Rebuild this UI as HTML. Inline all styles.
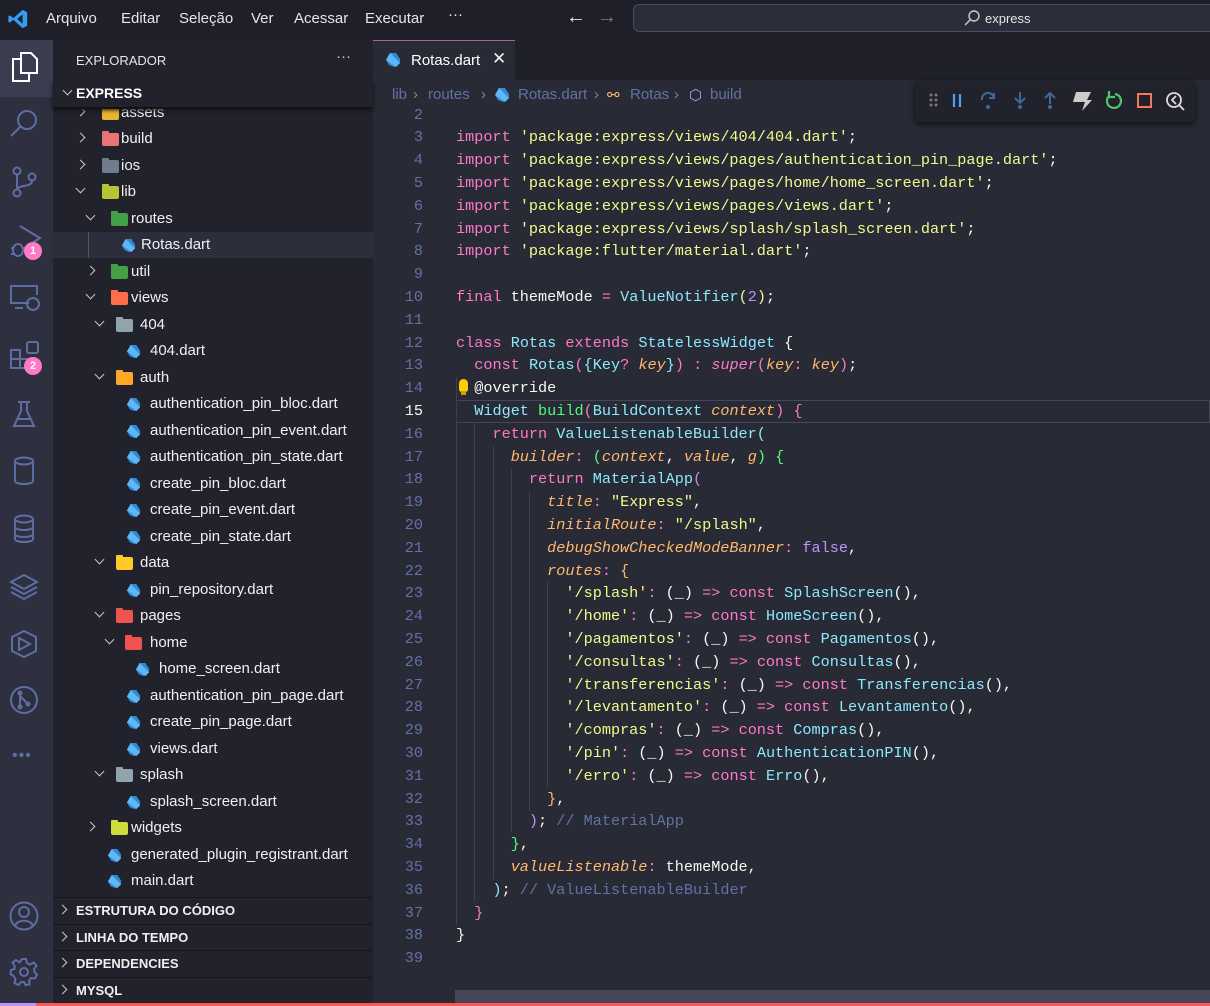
<!DOCTYPE html>
<html><head><meta charset="utf-8"><style>
*{margin:0;padding:0;box-sizing:border-box}
body{width:1210px;height:1006px;background:#282a36;overflow:hidden;position:relative;font-family:"Liberation Sans",sans-serif;color:#f8f8f2}
.abs{position:absolute}
#title{left:0;top:0;width:1210px;height:40px;background:#1e1f29}
.menu{top:10px;font-size:15px;color:#e6e6e6}
#act{left:0;top:40px;width:53px;height:963px;background:#2e3040}
#side{left:53px;top:40px;width:320px;height:963px;background:#21222c}
.row{position:absolute;left:0;width:320px;height:26px;font-size:15px;line-height:26px;color:#f0f0f0;white-space:nowrap}
.chev{position:absolute;top:8px;width:7px;height:7px;border-right:1.5px solid #c8c8c8;border-bottom:1.5px solid #c8c8c8}
.chev.o{transform:rotate(45deg);top:6px}
.chev.c{transform:rotate(-45deg)}
.fold{position:absolute;top:7px;width:17px;height:13px;border-radius:2px}
.fold:before{content:"";position:absolute;left:0;top:-2px;width:7px;height:3px;border-radius:1px 1px 0 0;background:inherit}
.dart{position:absolute;top:6px;width:15px;height:15px}
.panel{position:absolute;left:0;width:320px;height:26px;border-top:1px solid #15161d;font-size:13px;font-weight:bold;line-height:26px;color:#f0f0f0}
#code{left:373px;top:103.6px;font-family:"Liberation Mono",monospace;font-size:15.2px;line-height:22.8px;white-space:pre}
.ln{position:absolute;left:0;width:50px;text-align:right;color:#6272a4}
.cl{position:absolute;left:83px}
.k{color:#ff79c6}.s{color:#f1fa8c}.c{color:#8be9fd}.g{color:#50fa7b}.p{color:#ffb86c;font-style:italic}.b{color:#bd93f9}.m{color:#6272a4}.ki{color:#ff79c6;font-style:italic}.o{color:#ffb86c}
.guide{position:absolute;width:1px;background:#3d4052}
.bc{position:absolute;top:86px;font-size:15px;color:#6272a4;white-space:nowrap}
</style></head><body>
<div id="title" class="abs">
<svg class="abs" style="left:7px;top:8px" width="22" height="22" viewBox="0 0 24 24"><path d="M17 2 L22 4.5 V19.5 L17 22 L7 13 L3 16 L1.5 15 V9 L3 8 L7 11 L17 2Z M17 7 L11 12 L17 17Z" fill="#2f9ef4" fill-rule="evenodd"/></svg>
<div class="abs menu" style="left:46px">Arquivo</div>
<div class="abs menu" style="left:121px">Editar</div>
<div class="abs menu" style="left:179px">Seleção</div>
<div class="abs menu" style="left:251px">Ver</div>
<div class="abs menu" style="left:294px">Acessar</div>
<div class="abs menu" style="left:365px">Executar</div>
<div class="abs menu" style="left:448px;top:6px">···</div>
<div class="abs" style="left:566px;top:6px;font-size:20px;color:#e6e6e6">←</div>
<div class="abs" style="left:597px;top:6px;font-size:20px;color:#777">→</div>
<div class="abs" style="left:633px;top:4px;width:590px;height:28px;background:#2b2d3a;border:1px solid #4a4d60;border-radius:6px"></div>
<svg class="abs" style="left:963px;top:9px" width="18" height="18" viewBox="0 0 18 18"><circle cx="11" cy="7" r="5" fill="none" stroke="#ccc" stroke-width="1.4"/><path d="M7.5 10.5 L2 16" stroke="#ccc" stroke-width="1.4"/></svg>
<div class="abs" style="left:985px;top:11px;font-size:13px;color:#e6e6e6">express</div>
</div>

<div id="act" class="abs">
<div class="abs" style="left:0;top:0;width:53px;height:57px;background:#3b3d50"></div>
<svg class="abs" style="left:9px;top:11px" width="30" height="32" viewBox="0 0 30 32"><path d="M12 2 H22 L28 8 V22 H12Z" fill="none" stroke="#fff" stroke-width="2"/><path d="M12 8 H4 V30 H20 V22" fill="none" stroke="#fff" stroke-width="2"/></svg>
<svg class="abs" style="left:8px;top:67px" width="34" height="34" viewBox="0 0 34 34" fill="none" stroke="#5e6ea4" stroke-width="2"><circle cx="19" cy="13" r="9"/><path d="M12.5 19.5 L3 29"/></svg>
<svg class="abs" style="left:9px;top:125px" width="30" height="34" viewBox="0 0 30 34" fill="none" stroke="#5e6ea4" stroke-width="2"><circle cx="8" cy="6" r="3.5"/><circle cx="8" cy="28" r="3.5"/><circle cx="23" cy="12" r="3.5"/><path d="M8 10 V24 M23 16 C23 22 10 20 8 24"/></svg>
<svg class="abs" style="left:8px;top:184px" width="34" height="34" viewBox="0 0 34 34" fill="none" stroke="#5e6ea4" stroke-width="2"><path d="M12 2 L32 14 L16 24"/><ellipse cx="10" cy="26" rx="5" ry="6"/><path d="M3 24 H6 M3 30 H6 M14 24 H17"/></svg>
<div class="abs" style="left:24px;top:202px;width:18px;height:18px;border-radius:9px;background:#ff79c6;font-size:11px;font-weight:bold;text-align:center;line-height:18px;color:#fff">1</div>
<svg class="abs" style="left:9px;top:243px" width="32" height="30" viewBox="0 0 32 30" fill="none" stroke="#5e6ea4" stroke-width="2"><path d="M20 20 H2 V3 H28 V12"/><path d="M6 25 H14"/><circle cx="24" cy="21" r="6"/></svg>
<svg class="abs" style="left:9px;top:300px" width="32" height="32" viewBox="0 0 32 32" fill="none" stroke="#5e6ea4" stroke-width="2"><rect x="2" y="10" width="9" height="9"/><rect x="2" y="19" width="9" height="9"/><rect x="11" y="19" width="9" height="9"/><rect x="18" y="2" width="11" height="11" rx="2"/></svg>
<div class="abs" style="left:24px;top:317px;width:18px;height:18px;border-radius:9px;background:#ff79c6;font-size:11px;font-weight:bold;text-align:center;line-height:18px;color:#fff">2</div>
<svg class="abs" style="left:12px;top:360px" width="24" height="28" viewBox="0 0 24 28" fill="none" stroke="#5e6ea4" stroke-width="2"><path d="M6 2 H18 M9 2 V11 L2 26 H22 L15 11 V2 M5 19 H19"/></svg>
<svg class="abs" style="left:13px;top:416px" width="22" height="30" viewBox="0 0 22 30" fill="none" stroke="#5e6ea4" stroke-width="2"><ellipse cx="11" cy="5" rx="9" ry="3.5"/><path d="M2 5 V25 C2 29 20 29 20 25 V5"/></svg>
<svg class="abs" style="left:13px;top:474px" width="22" height="30" viewBox="0 0 22 30" fill="none" stroke="#5e6ea4" stroke-width="2"><ellipse cx="11" cy="5" rx="9" ry="3.5"/><path d="M2 5 V25 C2 29 20 29 20 25 V5 M2 13 C2 17 20 17 20 13 M2 20 C2 24 20 24 20 20"/></svg>
<svg class="abs" style="left:9px;top:532px" width="30" height="30" viewBox="0 0 30 30" fill="none" stroke="#5e6ea4" stroke-width="2"><path d="M15 3 L28 10 L15 17 L2 10Z M2 15 L15 22 L28 15 M2 20 L15 27 L28 20"/></svg>
<svg class="abs" style="left:10px;top:589px" width="28" height="30" viewBox="0 0 28 30" fill="none" stroke="#5e6ea4" stroke-width="2"><path d="M14 2 L26 8 V22 L14 28 L2 22 V8Z M9 9 L20 15 L9 21Z"/></svg>
<svg class="abs" style="left:9px;top:645px" width="30" height="30" viewBox="0 0 30 30" fill="none" stroke="#5e6ea4" stroke-width="2"><circle cx="15" cy="15" r="13"/><path d="M11 7 V23 M11 11 L19 19"/><circle cx="11" cy="8" r="1.5"/><circle cx="11" cy="22" r="1.5"/><circle cx="19" cy="19" r="1.5"/></svg>
<div class="abs" style="left:12px;top:707px;font-size:16px;color:#5e6ea4;letter-spacing:1px">•••</div>
<svg class="abs" style="left:9px;top:861px" width="30" height="30" viewBox="0 0 30 30" fill="none" stroke="#5e6ea4" stroke-width="2"><circle cx="15" cy="15" r="13.5"/><circle cx="15" cy="11" r="5"/><path d="M6 25 C8 18 22 18 24 25"/></svg>
<svg class="abs" style="left:9px;top:917px" width="30" height="30" viewBox="0 0 30 30" fill="none" stroke="#5e6ea4" stroke-width="2"><circle cx="15" cy="15" r="4"/><path d="M13 2 H17 L18 6 L21 7.5 L25 5.5 L27.5 9 L25 12 L25.5 15 L28 17.5 L26 21.5 L22 21 L20 23.5 L20.5 27.5 L16.5 28 L15 25 L12 25 L9.5 28 L5.5 26 L6.5 22 L4.5 19 L1.5 17 L2 13 L5.5 12 L5.5 8.5 L3.5 5.5 L7 3 L10.5 5.5 Z"/></svg>
</div>

<div id="side" class="abs">
<div class="abs" style="left:23px;top:13px;font-size:13px;color:#e6e6e6">EXPLORADOR</div>
<div class="abs" style="left:283px;top:8px;font-size:15px;color:#ccc">···</div>
<div class="abs" style="left:0;top:40px;width:320px;height:27px;background:#21222c;box-shadow:0 3px 4px #111;z-index:2"></div>
<div class="chev o abs" style="left:11px;top:47px;z-index:3"></div>
<div class="abs" style="left:23px;top:45px;font-size:14px;font-weight:bold;color:#fff;z-index:3">EXPRESS</div>
<div class="abs" style="left:0;top:68.5px;width:320px;height:789px;overflow:hidden" id="tree">
<div class="row" style="top:-9px"><div class="chev c" style="left:24px"></div><div class="fold" style="left:49px;background:#e8b530"></div><span style="position:absolute;left:68px">assets</span></div>
<div class="row" style="top:17.5px"><div class="chev c" style="left:24px"></div><div class="fold" style="left:49px;background:#e87474"></div><span style="position:absolute;left:68px">build</span></div>
<div class="row" style="top:44px"><div class="chev c" style="left:24px"></div><div class="fold" style="left:49px;background:#6f7d8c"></div><span style="position:absolute;left:68px">ios</span></div>
<div class="row" style="top:70.5px"><div class="chev o" style="left:24px"></div><div class="fold" style="left:49px;background:#b8c431"></div><span style="position:absolute;left:68px">lib</span></div>
<div class="row" style="top:97px"><div class="chev o" style="left:34px"></div><div class="fold" style="left:58px;background:#43a047"></div><span style="position:absolute;left:78px">routes</span></div>
<div class="row" style="top:123.5px;background:#2c2e3c"><div class="guide" style="left:35px;top:0;height:26px;background:#555"></div><svg class="dart" style="left:68px" viewBox="0 0 16 16"><path d="M5 1 L11 1 L15 7 L15 11 L9 15 L4 13 L1 8 Z" fill="#2f8bd8"/><path d="M5 1 L15 11 L11 15 L1 8Z" fill="#5fb8f5"/></svg><span style="position:absolute;left:88px">Rotas.dart</span></div>
<div class="row" style="top:150px"><div class="chev c" style="left:34px"></div><div class="fold" style="left:58px;background:#43a047"></div><span style="position:absolute;left:78px">util</span></div>
<div class="row" style="top:176.5px"><div class="chev o" style="left:34px"></div><div class="fold" style="left:58px;background:#ff6e4a"></div><span style="position:absolute;left:78px">views</span></div>
<div class="row" style="top:203px"><div class="chev o" style="left:43px"></div><div class="fold" style="left:63px;background:#90a4ae"></div><span style="position:absolute;left:87px">404</span></div>
<div class="row" style="top:229.5px"><svg class="dart" style="left:73px" viewBox="0 0 16 16"><path d="M5 1 L11 1 L15 7 L15 11 L9 15 L4 13 L1 8 Z" fill="#2f8bd8"/><path d="M5 1 L15 11 L11 15 L1 8Z" fill="#5fb8f5"/></svg><span style="position:absolute;left:97px">404.dart</span></div>
<div class="row" style="top:256px"><div class="chev o" style="left:43px"></div><div class="fold" style="left:63px;background:#ffa726"></div><span style="position:absolute;left:87px">auth</span></div>
<div class="row" style="top:282.5px"><svg class="dart" style="left:73px" viewBox="0 0 16 16"><path d="M5 1 L11 1 L15 7 L15 11 L9 15 L4 13 L1 8 Z" fill="#2f8bd8"/><path d="M5 1 L15 11 L11 15 L1 8Z" fill="#5fb8f5"/></svg><span style="position:absolute;left:97px">authentication_pin_bloc.dart</span></div>
<div class="row" style="top:309px"><svg class="dart" style="left:73px" viewBox="0 0 16 16"><path d="M5 1 L11 1 L15 7 L15 11 L9 15 L4 13 L1 8 Z" fill="#2f8bd8"/><path d="M5 1 L15 11 L11 15 L1 8Z" fill="#5fb8f5"/></svg><span style="position:absolute;left:97px">authentication_pin_event.dart</span></div>
<div class="row" style="top:335.5px"><svg class="dart" style="left:73px" viewBox="0 0 16 16"><path d="M5 1 L11 1 L15 7 L15 11 L9 15 L4 13 L1 8 Z" fill="#2f8bd8"/><path d="M5 1 L15 11 L11 15 L1 8Z" fill="#5fb8f5"/></svg><span style="position:absolute;left:97px">authentication_pin_state.dart</span></div>
<div class="row" style="top:362px"><svg class="dart" style="left:73px" viewBox="0 0 16 16"><path d="M5 1 L11 1 L15 7 L15 11 L9 15 L4 13 L1 8 Z" fill="#2f8bd8"/><path d="M5 1 L15 11 L11 15 L1 8Z" fill="#5fb8f5"/></svg><span style="position:absolute;left:97px">create_pin_bloc.dart</span></div>
<div class="row" style="top:388.5px"><svg class="dart" style="left:73px" viewBox="0 0 16 16"><path d="M5 1 L11 1 L15 7 L15 11 L9 15 L4 13 L1 8 Z" fill="#2f8bd8"/><path d="M5 1 L15 11 L11 15 L1 8Z" fill="#5fb8f5"/></svg><span style="position:absolute;left:97px">create_pin_event.dart</span></div>
<div class="row" style="top:415px"><svg class="dart" style="left:73px" viewBox="0 0 16 16"><path d="M5 1 L11 1 L15 7 L15 11 L9 15 L4 13 L1 8 Z" fill="#2f8bd8"/><path d="M5 1 L15 11 L11 15 L1 8Z" fill="#5fb8f5"/></svg><span style="position:absolute;left:97px">create_pin_state.dart</span></div>
<div class="row" style="top:441.5px"><div class="chev o" style="left:43px"></div><div class="fold" style="left:63px;background:#ffca28"></div><span style="position:absolute;left:87px">data</span></div>
<div class="row" style="top:468px"><svg class="dart" style="left:73px" viewBox="0 0 16 16"><path d="M5 1 L11 1 L15 7 L15 11 L9 15 L4 13 L1 8 Z" fill="#2f8bd8"/><path d="M5 1 L15 11 L11 15 L1 8Z" fill="#5fb8f5"/></svg><span style="position:absolute;left:97px">pin_repository.dart</span></div>
<div class="row" style="top:494.5px"><div class="chev o" style="left:43px"></div><div class="fold" style="left:63px;background:#ef5350"></div><span style="position:absolute;left:87px">pages</span></div>
<div class="row" style="top:521px"><div class="chev o" style="left:53px"></div><div class="fold" style="left:72px;background:#ef5350"></div><span style="position:absolute;left:97px">home</span></div>
<div class="row" style="top:547.5px"><svg class="dart" style="left:82px" viewBox="0 0 16 16"><path d="M5 1 L11 1 L15 7 L15 11 L9 15 L4 13 L1 8 Z" fill="#2f8bd8"/><path d="M5 1 L15 11 L11 15 L1 8Z" fill="#5fb8f5"/></svg><span style="position:absolute;left:106px">home_screen.dart</span></div>
<div class="row" style="top:574px"><svg class="dart" style="left:73px" viewBox="0 0 16 16"><path d="M5 1 L11 1 L15 7 L15 11 L9 15 L4 13 L1 8 Z" fill="#2f8bd8"/><path d="M5 1 L15 11 L11 15 L1 8Z" fill="#5fb8f5"/></svg><span style="position:absolute;left:97px">authentication_pin_page.dart</span></div>
<div class="row" style="top:600.5px"><svg class="dart" style="left:73px" viewBox="0 0 16 16"><path d="M5 1 L11 1 L15 7 L15 11 L9 15 L4 13 L1 8 Z" fill="#2f8bd8"/><path d="M5 1 L15 11 L11 15 L1 8Z" fill="#5fb8f5"/></svg><span style="position:absolute;left:97px">create_pin_page.dart</span></div>
<div class="row" style="top:627px"><svg class="dart" style="left:73px" viewBox="0 0 16 16"><path d="M5 1 L11 1 L15 7 L15 11 L9 15 L4 13 L1 8 Z" fill="#2f8bd8"/><path d="M5 1 L15 11 L11 15 L1 8Z" fill="#5fb8f5"/></svg><span style="position:absolute;left:97px">views.dart</span></div>
<div class="row" style="top:653.5px"><div class="chev o" style="left:43px"></div><div class="fold" style="left:63px;background:#90a4ae"></div><span style="position:absolute;left:87px">splash</span></div>
<div class="row" style="top:680px"><svg class="dart" style="left:73px" viewBox="0 0 16 16"><path d="M5 1 L11 1 L15 7 L15 11 L9 15 L4 13 L1 8 Z" fill="#2f8bd8"/><path d="M5 1 L15 11 L11 15 L1 8Z" fill="#5fb8f5"/></svg><span style="position:absolute;left:97px">splash_screen.dart</span></div>
<div class="row" style="top:706.5px"><div class="chev c" style="left:34px"></div><div class="fold" style="left:58px;background:#cddc39"></div><span style="position:absolute;left:78px">widgets</span></div>
<div class="row" style="top:733px"><svg class="dart" style="left:54px" viewBox="0 0 16 16"><path d="M5 1 L11 1 L15 7 L15 11 L9 15 L4 13 L1 8 Z" fill="#2f8bd8"/><path d="M5 1 L15 11 L11 15 L1 8Z" fill="#5fb8f5"/></svg><span style="position:absolute;left:78px">generated_plugin_registrant.dart</span></div>
<div class="row" style="top:759.5px"><svg class="dart" style="left:54px" viewBox="0 0 16 16"><path d="M5 1 L11 1 L15 7 L15 11 L9 15 L4 13 L1 8 Z" fill="#2f8bd8"/><path d="M5 1 L15 11 L11 15 L1 8Z" fill="#5fb8f5"/></svg><span style="position:absolute;left:78px">main.dart</span></div>
</div>
<div class="panel" style="top:857px"><div class="chev c" style="left:6px"></div><span style="position:absolute;left:23px">ESTRUTURA DO CÓDIGO</span></div>
<div class="panel" style="top:884px"><div class="chev c" style="left:6px"></div><span style="position:absolute;left:23px">LINHA DO TEMPO</span></div>
<div class="panel" style="top:910px"><div class="chev c" style="left:6px"></div><span style="position:absolute;left:23px">DEPENDENCIES</span></div>
<div class="panel" style="top:937px"><div class="chev c" style="left:6px"></div><span style="position:absolute;left:23px">MYSQL</span></div>
</div>

<!-- tabs -->
<div class="abs" style="left:373px;top:40px;width:837px;height:40px;background:#1e1f29"></div>
<div class="abs" style="left:373px;top:40px;width:142px;height:40px;background:#282a36;border-top:1px solid #b0608f"></div>
<svg class="abs" style="left:385px;top:51px" width="16" height="18" viewBox="0 0 16 16"><path d="M5 1 L11 1 L15 7 L15 11 L9 15 L4 13 L1 8 Z" fill="#2f8bd8"/><path d="M5 1 L15 11 L11 15 L1 8Z" fill="#5fb8f5"/></svg>
<div class="abs" style="left:411px;top:52px;font-size:15px;color:#fff">Rotas.dart</div>
<div class="abs" style="left:492px;top:49px;font-size:17px;color:#eee">✕</div>
<!-- breadcrumb -->
<div class="bc" style="left:392px">lib</div>
<div class="bc" style="left:413px;color:#888">›</div>
<div class="bc" style="left:428px">routes</div>
<div class="bc" style="left:481px;color:#888">›</div>
<svg class="abs" style="left:494px;top:86px" width="16" height="18" viewBox="0 0 16 16"><path d="M5 1 L11 1 L15 7 L15 11 L9 15 L4 13 L1 8 Z" fill="#2f8bd8"/><path d="M5 1 L15 11 L11 15 L1 8Z" fill="#5fb8f5"/></svg>
<div class="bc" style="left:518px">Rotas.dart</div>
<div class="bc" style="left:594px;color:#888">›</div>
<div class="bc" style="left:607px;color:#ffb86c">⚯</div>
<div class="bc" style="left:630px">Rotas</div>
<div class="bc" style="left:674px;color:#888">›</div>
<div class="bc" style="left:689px;color:#bd93f9">⬡</div>
<div class="bc" style="left:710px">build</div>
<!-- debug toolbar -->
<div class="abs" style="left:915px;top:81px;width:280px;height:41px;background:#21222c;box-shadow:0 2px 6px #111;border-radius:3px"></div>
<svg class="abs" style="left:925px;top:89px" width="270" height="24" viewBox="0 0 270 24">
<g fill="#777"><circle cx="6" cy="6" r="1.5"/><circle cx="11" cy="6" r="1.5"/><circle cx="6" cy="11" r="1.5"/><circle cx="11" cy="11" r="1.5"/><circle cx="6" cy="16" r="1.5"/><circle cx="11" cy="16" r="1.5"/></g>
<path d="M29 5 V18 M35 5 V18" stroke="#4ea3f0" stroke-width="2.2"/>
<path d="M57 11 A6 6 0 0 1 69 9 M69 4 V9 H64" stroke="#3d6a9a" stroke-width="2" fill="none"/><circle cx="63" cy="18" r="2" fill="#3d6a9a"/>
<path d="M95 3 V14 M90 9 L95 14 L100 9" stroke="#3d6a9a" stroke-width="2" fill="none"/><circle cx="95" cy="18" r="2" fill="#3d6a9a"/>
<path d="M125 15 V4 M120 9 L125 4 L130 9" stroke="#3d6a9a" stroke-width="2" fill="none"/><circle cx="125" cy="18" r="2" fill="#3d6a9a"/>
<path d="M151 3 H166 L162 11 H167 L157 22 L160 13 H148Z" fill="#ccc"/>
<path d="M184 7 A7 7 0 1 0 190 5 M184 2 V8 H190" stroke="#50c66b" stroke-width="2.2" fill="none"/>
<rect x="213" y="5" width="13" height="13" stroke="#f07a5f" stroke-width="2" fill="none"/>
<circle cx="249" cy="11" r="7" stroke="#ddd" stroke-width="1.8" fill="none"/><path d="M254 16 L259 21 M251 7 L247 11 L251 15" stroke="#ddd" stroke-width="1.8" fill="none"/>
</svg>

<div class="abs" style="left:456px;top:400px;width:754px;height:23px;border:1px solid #44475a"></div>
<div class="guide" style="left:456px;top:377px;height:548px"></div>
<div class="guide" style="left:474px;top:423px;height:479px"></div>
<div class="guide" style="left:493px;top:446px;height:433px"></div>
<div class="guide" style="left:511px;top:468px;height:365px"></div>
<div class="guide" style="left:529px;top:491px;height:320px"></div>
<div class="guide" style="left:547px;top:582px;height:206px"></div>

<div id="code" class="abs">
<div class="ln" style="top:0">2</div>
<div class="ln" style="top:22.8px">3</div><div class="cl" style="top:22.8px"><span class="k">import</span> <span class="s">'package:express/views/404/404.dart'</span>;</div>
<div class="ln" style="top:45.6px">4</div><div class="cl" style="top:45.6px"><span class="k">import</span> <span class="s">'package:express/views/pages/authentication_pin_page.dart'</span>;</div>
<div class="ln" style="top:68.4px">5</div><div class="cl" style="top:68.4px"><span class="k">import</span> <span class="s">'package:express/views/pages/home/home_screen.dart'</span>;</div>
<div class="ln" style="top:91.2px">6</div><div class="cl" style="top:91.2px"><span class="k">import</span> <span class="s">'package:express/views/pages/views.dart'</span>;</div>
<div class="ln" style="top:114px">7</div><div class="cl" style="top:114px"><span class="k">import</span> <span class="s">'package:express/views/splash/splash_screen.dart'</span>;</div>
<div class="ln" style="top:136.8px">8</div><div class="cl" style="top:136.8px"><span class="k">import</span> <span class="s">'package:flutter/material.dart'</span>;</div>
<div class="ln" style="top:159.6px">9</div>
<div class="ln" style="top:182.4px">10</div><div class="cl" style="top:182.4px"><span class="k">final</span> themeMode <span class="k">=</span> <span class="c">ValueNotifier</span><span class="s">(</span><span class="b">2</span><span class="s">)</span>;</div>
<div class="ln" style="top:205.2px">11</div>
<div class="ln" style="top:228px">12</div><div class="cl" style="top:228px"><span class="k">class</span> <span class="c">Rotas</span> <span class="k">extends</span> <span class="c">StatelessWidget</span> {</div>
<div class="ln" style="top:250.8px">13</div><div class="cl" style="top:250.8px">  <span class="k">const</span> <span class="c">Rotas</span><span class="k">(</span><span class="c">{Key</span><span class="k">?</span> <span class="p">key</span><span class="c">}</span><span class="k">)</span> <span class="k">:</span> <span class="ki">super</span><span class="k">(</span><span class="p">key</span><span class="k">:</span> <span class="p">key</span><span class="k">)</span>;</div>
<div class="ln" style="top:273.6px">14</div><div class="cl" style="top:273.6px">  @override</div>
<div class="ln" style="top:296.4px;color:#f8f8f2">15</div><div class="cl" style="top:296.4px">  <span class="c">Widget</span> <span class="g">build</span><span class="k">(</span><span class="c">BuildContext</span> <span class="p">context</span><span class="k">)</span> <span class="k">{</span></div>
<div class="ln" style="top:319.2px">16</div><div class="cl" style="top:319.2px">    <span class="k">return</span> <span class="c">ValueListenableBuilder(</span></div>
<div class="ln" style="top:342px">17</div><div class="cl" style="top:342px">      <span class="p">builder</span><span class="k">:</span> <span class="g">(</span><span class="p">context</span>, <span class="p">value</span>, <span class="p">g</span><span class="g">)</span> <span class="g">{</span></div>
<div class="ln" style="top:364.8px">18</div><div class="cl" style="top:364.8px">        <span class="k">return</span> <span class="c">MaterialApp</span><span class="b">(</span></div>
<div class="ln" style="top:387.6px">19</div><div class="cl" style="top:387.6px">          <span class="p">title</span><span class="k">:</span> <span class="s">"Express"</span>,</div>
<div class="ln" style="top:410.4px">20</div><div class="cl" style="top:410.4px">          <span class="p">initialRoute</span><span class="k">:</span> <span class="s">"/splash"</span>,</div>
<div class="ln" style="top:433.2px">21</div><div class="cl" style="top:433.2px">          <span class="p">debugShowCheckedModeBanner</span><span class="k">:</span> <span class="b">false</span>,</div>
<div class="ln" style="top:456px">22</div><div class="cl" style="top:456px">          <span class="p">routes</span><span class="k">:</span> <span class="o">{</span></div>
<div class="ln" style="top:478.8px">23</div><div class="cl" style="top:478.8px">            <span class="s">'/splash'</span><span class="k">:</span> (_) <span class="k">=&gt;</span> <span class="k">const</span> <span class="c">SplashScreen</span>(),</div>
<div class="ln" style="top:501.6px">24</div><div class="cl" style="top:501.6px">            <span class="s">'/home'</span><span class="k">:</span> (_) <span class="k">=&gt;</span> <span class="k">const</span> <span class="c">HomeScreen</span>(),</div>
<div class="ln" style="top:524.4px">25</div><div class="cl" style="top:524.4px">            <span class="s">'/pagamentos'</span><span class="k">:</span> (_) <span class="k">=&gt;</span> <span class="k">const</span> <span class="c">Pagamentos</span>(),</div>
<div class="ln" style="top:547.2px">26</div><div class="cl" style="top:547.2px">            <span class="s">'/consultas'</span><span class="k">:</span> (_) <span class="k">=&gt;</span> <span class="k">const</span> <span class="c">Consultas</span>(),</div>
<div class="ln" style="top:570px">27</div><div class="cl" style="top:570px">            <span class="s">'/transferencias'</span><span class="k">:</span> (_) <span class="k">=&gt;</span> <span class="k">const</span> <span class="c">Transferencias</span>(),</div>
<div class="ln" style="top:592.8px">28</div><div class="cl" style="top:592.8px">            <span class="s">'/levantamento'</span><span class="k">:</span> (_) <span class="k">=&gt;</span> <span class="k">const</span> <span class="c">Levantamento</span>(),</div>
<div class="ln" style="top:615.6px">29</div><div class="cl" style="top:615.6px">            <span class="s">'/compras'</span><span class="k">:</span> (_) <span class="k">=&gt;</span> <span class="k">const</span> <span class="c">Compras</span>(),</div>
<div class="ln" style="top:638.4px">30</div><div class="cl" style="top:638.4px">            <span class="s">'/pin'</span><span class="k">:</span> (_) <span class="k">=&gt;</span> <span class="k">const</span> <span class="c">AuthenticationPIN</span>(),</div>
<div class="ln" style="top:661.2px">31</div><div class="cl" style="top:661.2px">            <span class="s">'/erro'</span><span class="k">:</span> (_) <span class="k">=&gt;</span> <span class="k">const</span> <span class="c">Erro</span>(),</div>
<div class="ln" style="top:684px">32</div><div class="cl" style="top:684px">          <span class="o">}</span>,</div>
<div class="ln" style="top:706.8px">33</div><div class="cl" style="top:706.8px">        <span class="b">)</span>; <span class="m">// MaterialApp</span></div>
<div class="ln" style="top:729.6px">34</div><div class="cl" style="top:729.6px">      <span class="g">}</span>,</div>
<div class="ln" style="top:752.4px">35</div><div class="cl" style="top:752.4px">      <span class="p">valueListenable</span><span class="k">:</span> themeMode,</div>
<div class="ln" style="top:775.2px">36</div><div class="cl" style="top:775.2px">    <span class="c">)</span>; <span class="m">// ValueListenableBuilder</span></div>
<div class="ln" style="top:798px">37</div><div class="cl" style="top:798px">  <span class="k">}</span></div>
<div class="ln" style="top:820.8px">38</div><div class="cl" style="top:820.8px">}</div>
<div class="ln" style="top:843.6px">39</div>
</div>
<div class="abs" style="left:459px;top:379px;width:9px;height:13px;border-radius:5px 5px 3px 3px;background:#ffcc00"></div>
<div class="abs" style="left:461px;top:391px;width:5px;height:4px;background:#c9a000"></div>

<div class="abs" style="left:455px;top:990px;width:755px;height:13px;background:#44475a"></div>
<div class="abs" style="left:0;top:1003px;width:1210px;height:3px;background:#ff5555"></div>
<div class="abs" style="left:0;top:1003px;width:36px;height:3px;background:#bd93f9"></div>
</body></html>
